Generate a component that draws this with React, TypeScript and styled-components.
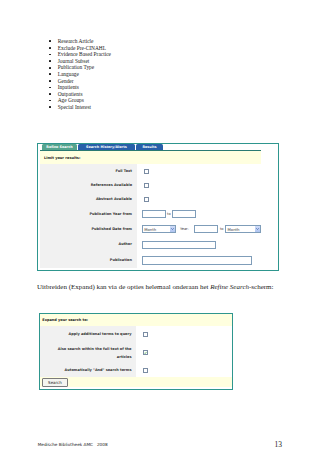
import React from "react";
import styled, { createGlobalStyle } from "styled-components";

const Global = createGlobalStyle`
  html, body { margin: 0; padding: 0; background: #fff; }
  body { font-family: "Liberation Serif", "Times New Roman", serif; color: #111; }
  * { box-sizing: border-box; }
`;

const Page = styled.div`
  width: 320px;
  height: 453px;
  display: flex;
  flex-direction: column;
  padding: 38px 38px 0 37px;
  overflow: hidden;
`;

const List = styled.ul`
  margin: 0;
  padding: 0 0 0 12px;
  list-style: none;
  font-size: 5.4px;
  line-height: 6.6px;
  color: #222;
`;

const Item = styled.li`
  display: flex;
  align-items: center;
  height: 6.6px;
  &::before {
    content: "";
    flex: none;
    width: 1.7px;
    height: 1.7px;
    border-radius: 50%;
    background: #111;
    margin-right: 7px;
  }
`;

const Panel = styled.div<{ $w: number; $ml: number; $mt: number; $pr: number; $pl: number; $bw: number }>`
  width: ${(p) => p.$w}px;
  margin-left: ${(p) => p.$ml}px;
  margin-top: ${(p) => p.$mt}px;
  border: ${(p) => p.$bw}px solid #2e968e;
  padding: 0 ${(p) => p.$pr}px 1.5px ${(p) => p.$pl}px;
  background: #fff;
  font-family: "DejaVu Sans", Verdana, sans-serif;
`;

const Tabs = styled.div`
  display: flex;
  gap: 1px;
  padding: 0.5px 0 0 2px;
  height: 7.5px;
  align-items: flex-end;
  border-bottom: 1px solid #2a7a72;
`;

const Tab = styled.div<{ $w: number; $active?: boolean }>`
  width: ${(p) => p.$w}px;
  height: 6.5px;
  background: ${(p) => (p.$active ? "#55a48e" : "#285fa9")};
  border-radius: 1.5px 1.5px 0 0;
  color: #fff;
  font-size: 3.4px;
  font-weight: bold;
  display: flex;
  align-items: center;
  justify-content: center;
  white-space: nowrap;
`;

const Header = styled.div<{ $h: number; $pl: number }>`
  height: ${(p) => p.$h}px;
  background: #ffffdf;
  display: flex;
  align-items: center;
  padding-left: ${(p) => p.$pl}px;
  font-size: 3.5px;
  font-weight: bold;
  color: #222;
`;

const Row = styled.div<{ $h: number; $col: number }>`
  display: grid;
  grid-template-columns: ${(p) => p.$col}px 1fr;
  height: ${(p) => p.$h}px;
`;

const Label = styled.div<{ $pr: number }>`
  background: #f1f1f1;
  display: flex;
  align-items: center;
  justify-content: flex-end;
  text-align: right;
  padding-right: ${(p) => p.$pr}px;
  font-size: 3.5px;
  line-height: 8.4px;
  font-weight: bold;
  color: #333;
  white-space: nowrap;
`;

const Value = styled.div<{ $pl: number }>`
  display: flex;
  align-items: center;
  padding-left: ${(p) => p.$pl}px;
  font-size: 3.6px;
  color: #333;
  white-space: nowrap;
`;

const Check = styled.span<{ $ml: number }>`
  width: 5px;
  height: 5px;
  margin-left: ${(p) => p.$ml}px;
  border: 0.7px solid #7a8ca3;
  background: #fff;
  display: flex;
  align-items: center;
  justify-content: center;
`;

const TextBox = styled.span<{ $w: number }>`
  width: ${(p) => p.$w}px;
  height: 8.2px;
  border: 0.7px solid #7f9db9;
  background: #fff;
  flex: none;
`;

const Word = styled.span<{ $l: number; $r: number }>`
  padding: 0 ${(p) => p.$r}px 0 ${(p) => p.$l}px;
`;

const SelectBox = styled.span<{ $w: number }>`
  width: ${(p) => p.$w}px;
  height: 8px;
  border: 0.7px solid #7f9db9;
  background: #fff;
  display: flex;
  align-items: center;
  justify-content: space-between;
  flex: none;
  font-size: 3.8px;
  color: #333;
  padding-left: 1.5px;
`;

const Arrow = styled.span`
  width: 5px;
  height: 100%;
  background: linear-gradient(#cfdcf8, #aec4f0);
  display: flex;
  align-items: center;
  justify-content: center;
`;

const Para = styled.p`
  margin: 12.5px 0 0 0;
  font-size: 7px;
  line-height: 8px;
  color: #222;
  white-space: nowrap;
`;

const FootBar = styled.div`
  height: 10px;
  background: #ffffdf;
  display: flex;
  align-items: center;
  padding-left: 2.3px;
`;

const Button = styled.span`
  width: 25.4px;
  height: 8.4px;
  border: 0.8px solid #7b7b7b;
  border-radius: 1px;
  background: #f5f5f0;
  font-family: "DejaVu Sans", Tahoma, sans-serif;
  font-size: 4px;
  color: #222;
  display: flex;
  align-items: center;
  justify-content: center;
`;

const Footer = styled.div`
  margin-top: auto;
  display: flex;
  justify-content: space-between;
  align-items: center;
  height: 8px;
  margin-bottom: 5px;
  padding-left: 0.7px;
`;

const FootLeft = styled.span`
  font-family: "DejaVu Sans", sans-serif;
  font-size: 4.2px;
  color: #222;
  white-space: pre;
`;

const FootRight = styled.span`
  font-size: 7.5px;
  color: #222;
`;

const Chevron = () => (
  <svg width="3" height="2" viewBox="0 0 6 4">
    <path d="M0.5 0.5 L3 3 L5.5 0.5" fill="none" stroke="#3b5fa6" strokeWidth="1.4" />
  </svg>
);

const Tick = () => (
  <svg width="3.6" height="3.6" viewBox="0 0 8 8">
    <path d="M1 4 L3 6 L7 1.5" fill="none" stroke="#2e9a2e" strokeWidth="1.8" />
  </svg>
);

const Month = ({ w }: { w: number }) => (
  <SelectBox $w={w}>
    Month
    <Arrow>
      <Chevron />
    </Arrow>
  </SelectBox>
);

const items = [
  "Research Article",
  "Exclude Pre-CINAHL",
  "Evidence Based Practice",
  "Journal Subset",
  "Publication Type",
  "Language",
  "Gender",
  "Inpatients",
  "Outpatients",
  "Age Groups",
  "Special Interest",
];

export default function App() {
  return (
    <>
      <Global />
      <Page>
        <List>
          {items.map((t) => (
            <Item key={t}>{t}</Item>
          ))}
        </List>

        <Panel $w={242} $ml={0} $mt={32.4} $pr={17} $pl={2} $bw={1.8}>
          <Tabs>
            <Tab $w={35} $active>
              Refine Search
            </Tab>
            <Tab $w={57}>Search History/Alerts</Tab>
            <Tab $w={27}>Results</Tab>
          </Tabs>
          <Header $h={12.5} $pl={4}>
            Limit your results:
          </Header>
          <Row $h={14.5} $col={97}>
            <Label $pr={5}>Full Text</Label>
            <Value $pl={4.7}>
              <Check $ml={2.3} />
            </Value>
          </Row>
          <Row $h={14} $col={97}>
            <Label $pr={5}>References Available</Label>
            <Value $pl={4.7}>
              <Check $ml={2.3} />
            </Value>
          </Row>
          <Row $h={14} $col={97}>
            <Label $pr={5}>Abstract Available</Label>
            <Value $pl={4.7}>
              <Check $ml={2.3} />
            </Value>
          </Row>
          <Row $h={15} $col={97}>
            <Label $pr={5}>Publication Year from</Label>
            <Value $pl={4.7}>
              <TextBox $w={24} />
              <Word $l={1.4} $r={1.8}>to</Word>
              <TextBox $w={23.4} />
            </Value>
          </Row>
          <Row $h={15.5} $col={97}>
            <Label $pr={5}>Published Date from</Label>
            <Value $pl={4.7}>
              <Month w={34.6} />
              <Word $l={3.7} $r={5.5}>Year:</Word>
              <TextBox $w={23.3} />
              <Word $l={2.4} $r={1.5}>to</Word>
              <Month w={35.7} />
            </Value>
          </Row>
          <Row $h={15.5} $col={97}>
            <Label $pr={5}>Author</Label>
            <Value $pl={4.7}>
              <TextBox $w={74.6} />
            </Value>
          </Row>
          <Row $h={16} $col={97}>
            <Label $pr={5}>Publication</Label>
            <Value $pl={4.7}>
              <TextBox $w={110.6} />
            </Value>
          </Row>
        </Panel>

        <Para>
          Uitbreiden (Expand) kan via de opties helemaal onderaan het <i>Refine Search</i>-scherm:
        </Para>

        <Panel $w={194} $ml={2} $mt={22} $pr={0} $pl={0} $bw={1.5}>
          <Header $h={12} $pl={2.3}>
            Expand your search to:
          </Header>
          <Row $h={16} $col={95.5}>
            <Label $pr={4}>Apply additional terms to query</Label>
            <Value $pl={6.3}>
              <Check $ml={1} />
            </Value>
          </Row>
          <Row $h={21} $col={95.5}>
            <Label $pr={4}>
              Also search within the full text of the
              <br />
              articles
            </Label>
            <Value $pl={6.3}>
              <Check $ml={1}>
                <Tick />
              </Check>
            </Value>
          </Row>
          <Row $h={14} $col={95.5}>
            <Label $pr={4}>Automatically "And" search terms</Label>
            <Value $pl={6.3}>
              <Check $ml={1} />
            </Value>
          </Row>
          <FootBar>
            <Button>Search</Button>
          </FootBar>
        </Panel>

        <Footer>
          <FootLeft>Medische Bibliotheek AMC   2008</FootLeft>
          <FootRight>13</FootRight>
        </Footer>
      </Page>
    </>
  );
}
